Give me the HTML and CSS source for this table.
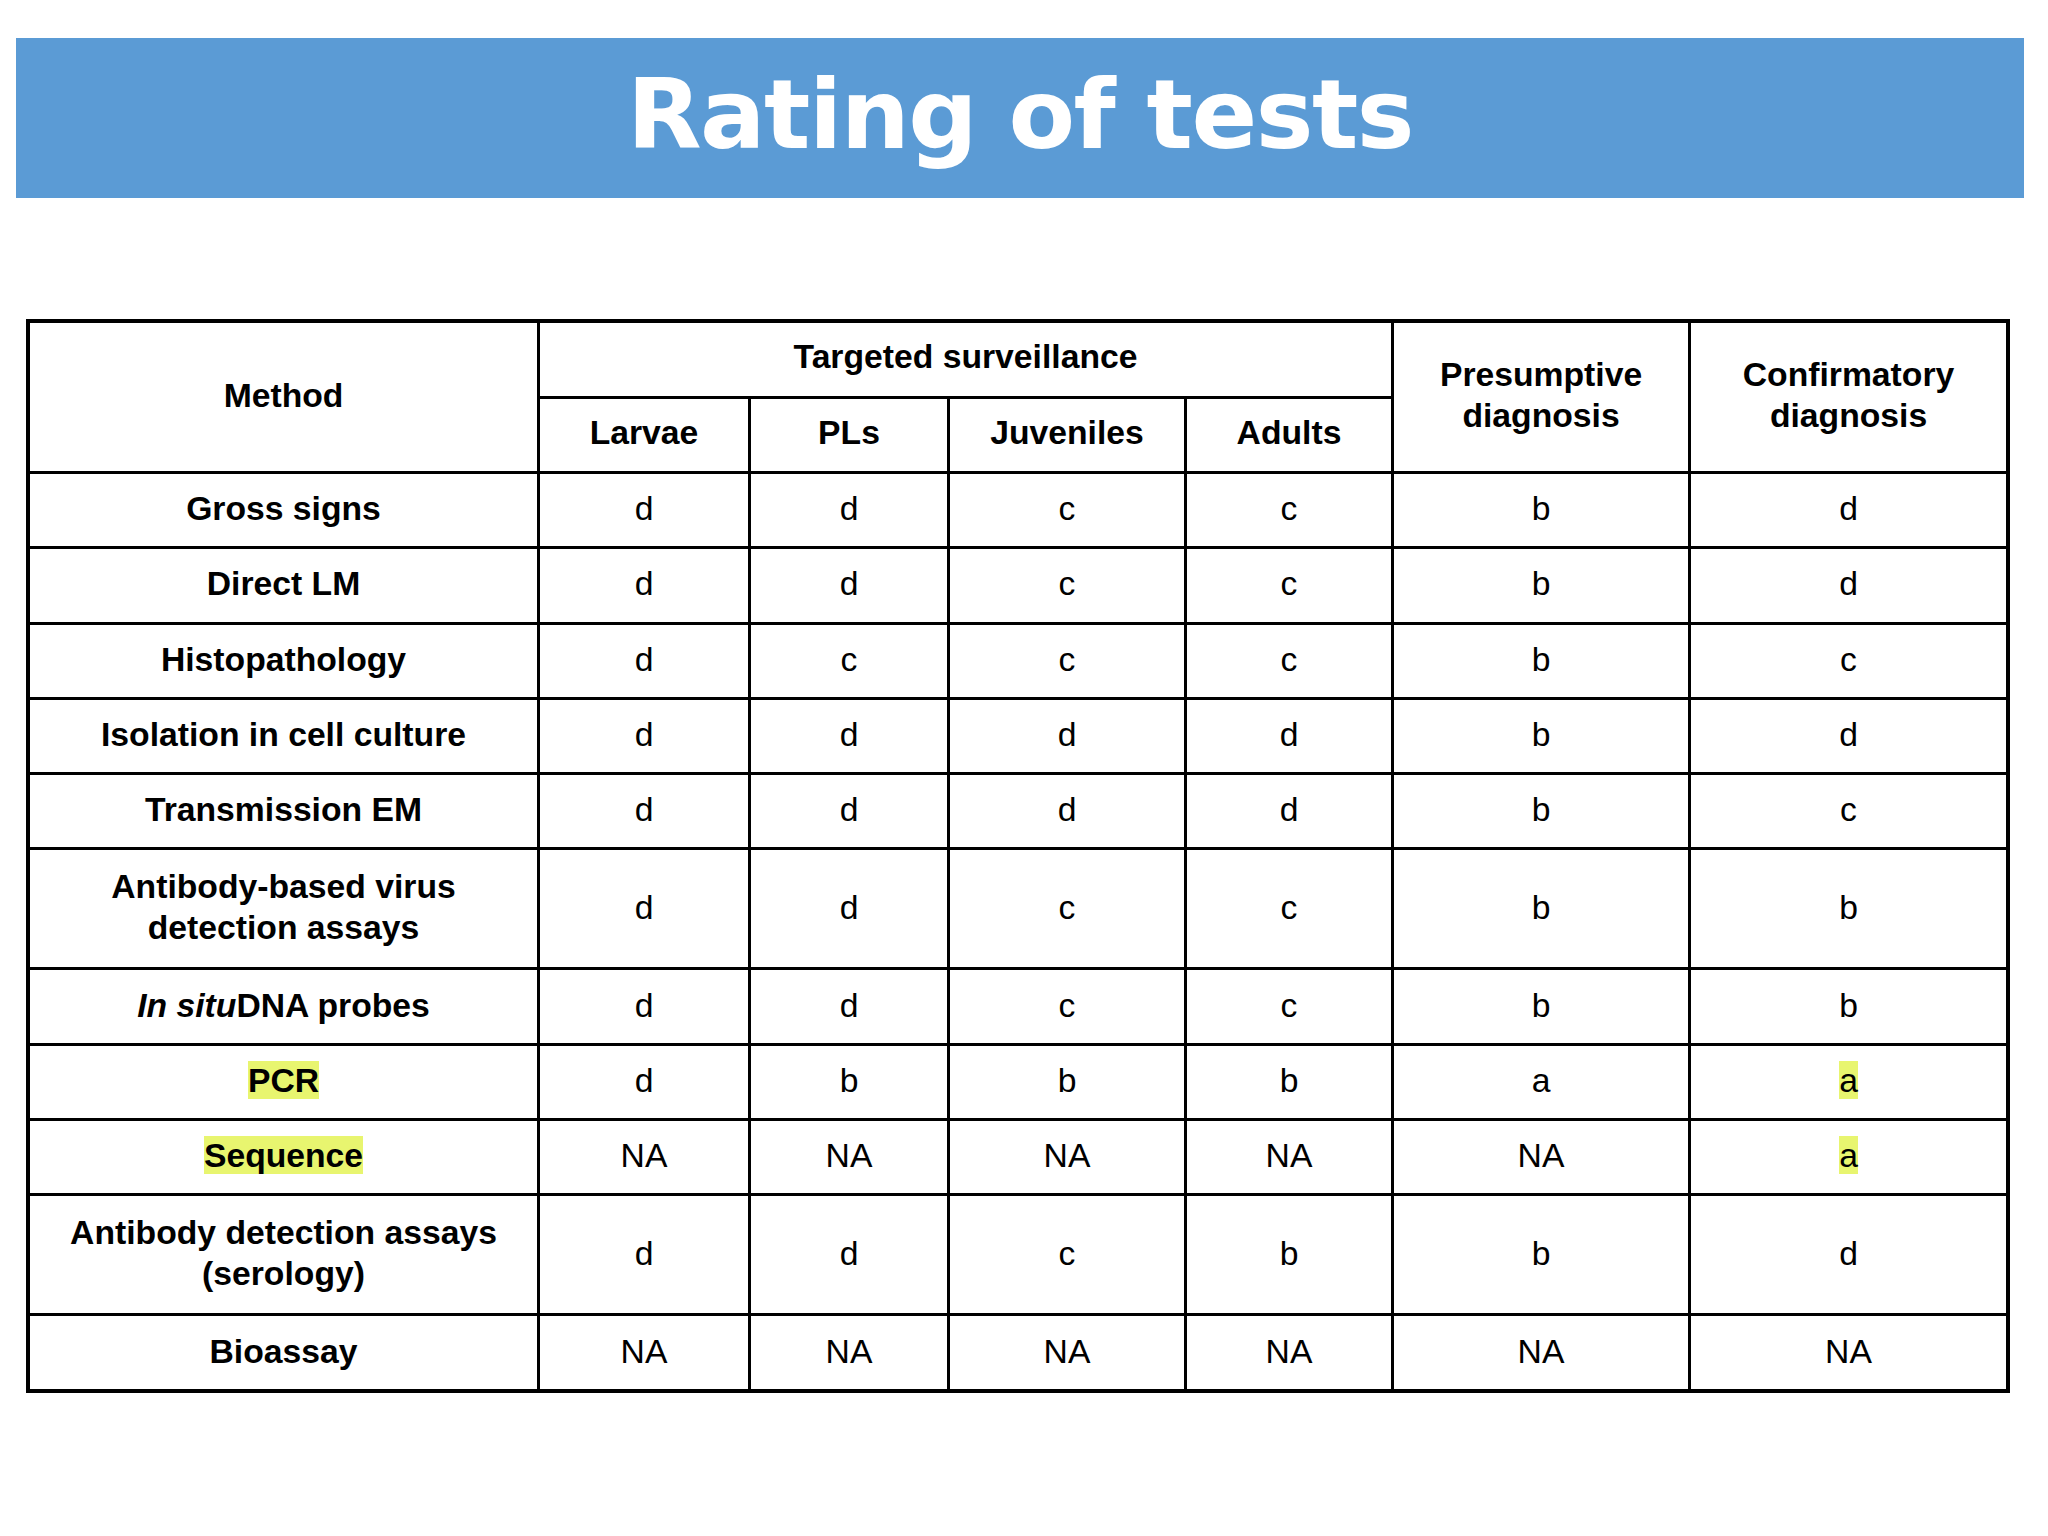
FILE: index.html
```html
<!DOCTYPE html>
<html lang="en">
<head>
<meta charset="utf-8">
<title>Rating of tests</title>
<link rel="stylesheet" href="styles.css">
</head>
<body>
<div class="slide">
  <header class="banner">
    <h1 class="title">Rating of tests</h1>
  </header>
  <table class="ratings">
    <colgroup>
      <col class="c-method">
      <col class="c-larvae">
      <col class="c-pls">
      <col class="c-juv">
      <col class="c-adults">
      <col class="c-pres">
      <col class="c-conf">
    </colgroup>
    <thead>
      <tr class="h1row">
        <th rowspan="2" class="method">Method</th>
        <th colspan="4" class="group">Targeted surveillance</th>
        <th rowspan="2" class="diag">Presumptive<br>diagnosis</th>
        <th rowspan="2" class="diag">Confirmatory<br>diagnosis</th>
      </tr>
      <tr class="h2row">
        <th>Larvae</th>
        <th>PLs</th>
        <th>Juveniles</th>
        <th>Adults</th>
      </tr>
    </thead>
    <tbody>
      <tr><th>Gross signs</th><td>d</td><td>d</td><td>c</td><td>c</td><td>b</td><td>d</td></tr>
      <tr><th>Direct LM</th><td>d</td><td>d</td><td>c</td><td>c</td><td>b</td><td>d</td></tr>
      <tr><th>Histopathology</th><td>d</td><td>c</td><td>c</td><td>c</td><td>b</td><td>c</td></tr>
      <tr><th>Isolation in cell culture</th><td>d</td><td>d</td><td>d</td><td>d</td><td>b</td><td>d</td></tr>
      <tr><th>Transmission EM</th><td>d</td><td>d</td><td>d</td><td>d</td><td>b</td><td>c</td></tr>
      <tr class="tall"><th>Antibody-based virus<br>detection assays</th><td>d</td><td>d</td><td>c</td><td>c</td><td>b</td><td>b</td></tr>
      <tr><th><em>In situ</em>DNA probes</th><td>d</td><td>d</td><td>c</td><td>c</td><td>b</td><td>b</td></tr>
      <tr><th><span class="hl">PCR</span></th><td>d</td><td>b</td><td>b</td><td>b</td><td>a</td><td><span class="hl">a</span></td></tr>
      <tr><th><span class="hl">Sequence</span></th><td>NA</td><td>NA</td><td>NA</td><td>NA</td><td>NA</td><td><span class="hl">a</span></td></tr>
      <tr class="tall"><th>Antibody detection assays<br>(serology)</th><td>d</td><td>d</td><td>c</td><td>b</td><td>b</td><td>d</td></tr>
      <tr><th>Bioassay</th><td>NA</td><td>NA</td><td>NA</td><td>NA</td><td>NA</td><td>NA</td></tr>
    </tbody>
  </table>
</div>
</body>
</html>
```

FILE: styles.css
```css
html, body {
  margin: 0;
  padding: 0;
  background: #ffffff;
}

.slide {
  width: 2048px;
  height: 1536px;
  box-sizing: border-box;
  padding: 38px 24px 0 16px;
}

.banner {
  height: 160px;
  box-sizing: border-box;
  background: #5b9bd5;
  padding-top: 28px;
  text-align: center;
}

.title {
  margin: 0;
  font-family: "DejaVu Sans", sans-serif;
  font-weight: 700;
  font-size: 97px;
  line-height: 97px;
  letter-spacing: -1.5px;
  color: #ffffff;
}

.ratings {
  margin: 121px 0 0 10px;
  width: 1984px;
  table-layout: fixed;
  border-collapse: separate;
  border-spacing: 3px;
  border: 1px solid #000;
  background: #000;
  font-family: "Liberation Sans", Arial, sans-serif;
  font-size: 33.7px;
  line-height: 41px;
  color: #000;
}

.c-method { width: 507px; }
.c-larvae { width: 208px; }
.c-pls { width: 196px; }
.c-juv { width: 234px; }
.c-adults { width: 204px; }
.c-pres { width: 294px; }
.c-conf { width: 315px; }

.ratings th,
.ratings td {
  background: #fff;
  padding: 0;
  text-align: center;
  vertical-align: middle;
}

.ratings th {
  font-weight: 700;
}

.ratings td {
  font-weight: 400;
}

.ratings em {
  font-style: italic;
}

.ratings th.method {
  padding-bottom: 4px;
}

.ratings th.group {
  padding-bottom: 7px;
}

.ratings th.diag {
  padding-bottom: 5px;
}

.h2row th {
  padding-bottom: 6px;
}

.ratings tbody th,
.ratings tbody td {
  padding-bottom: 3px;
}

.h1row { height: 73px; }
.h2row { height: 72px; }
.ratings tbody tr { height: 72.3px; }
.ratings tbody tr.tall { height: 117px; }

.hl {
  background: #e8f56f;
}
```
